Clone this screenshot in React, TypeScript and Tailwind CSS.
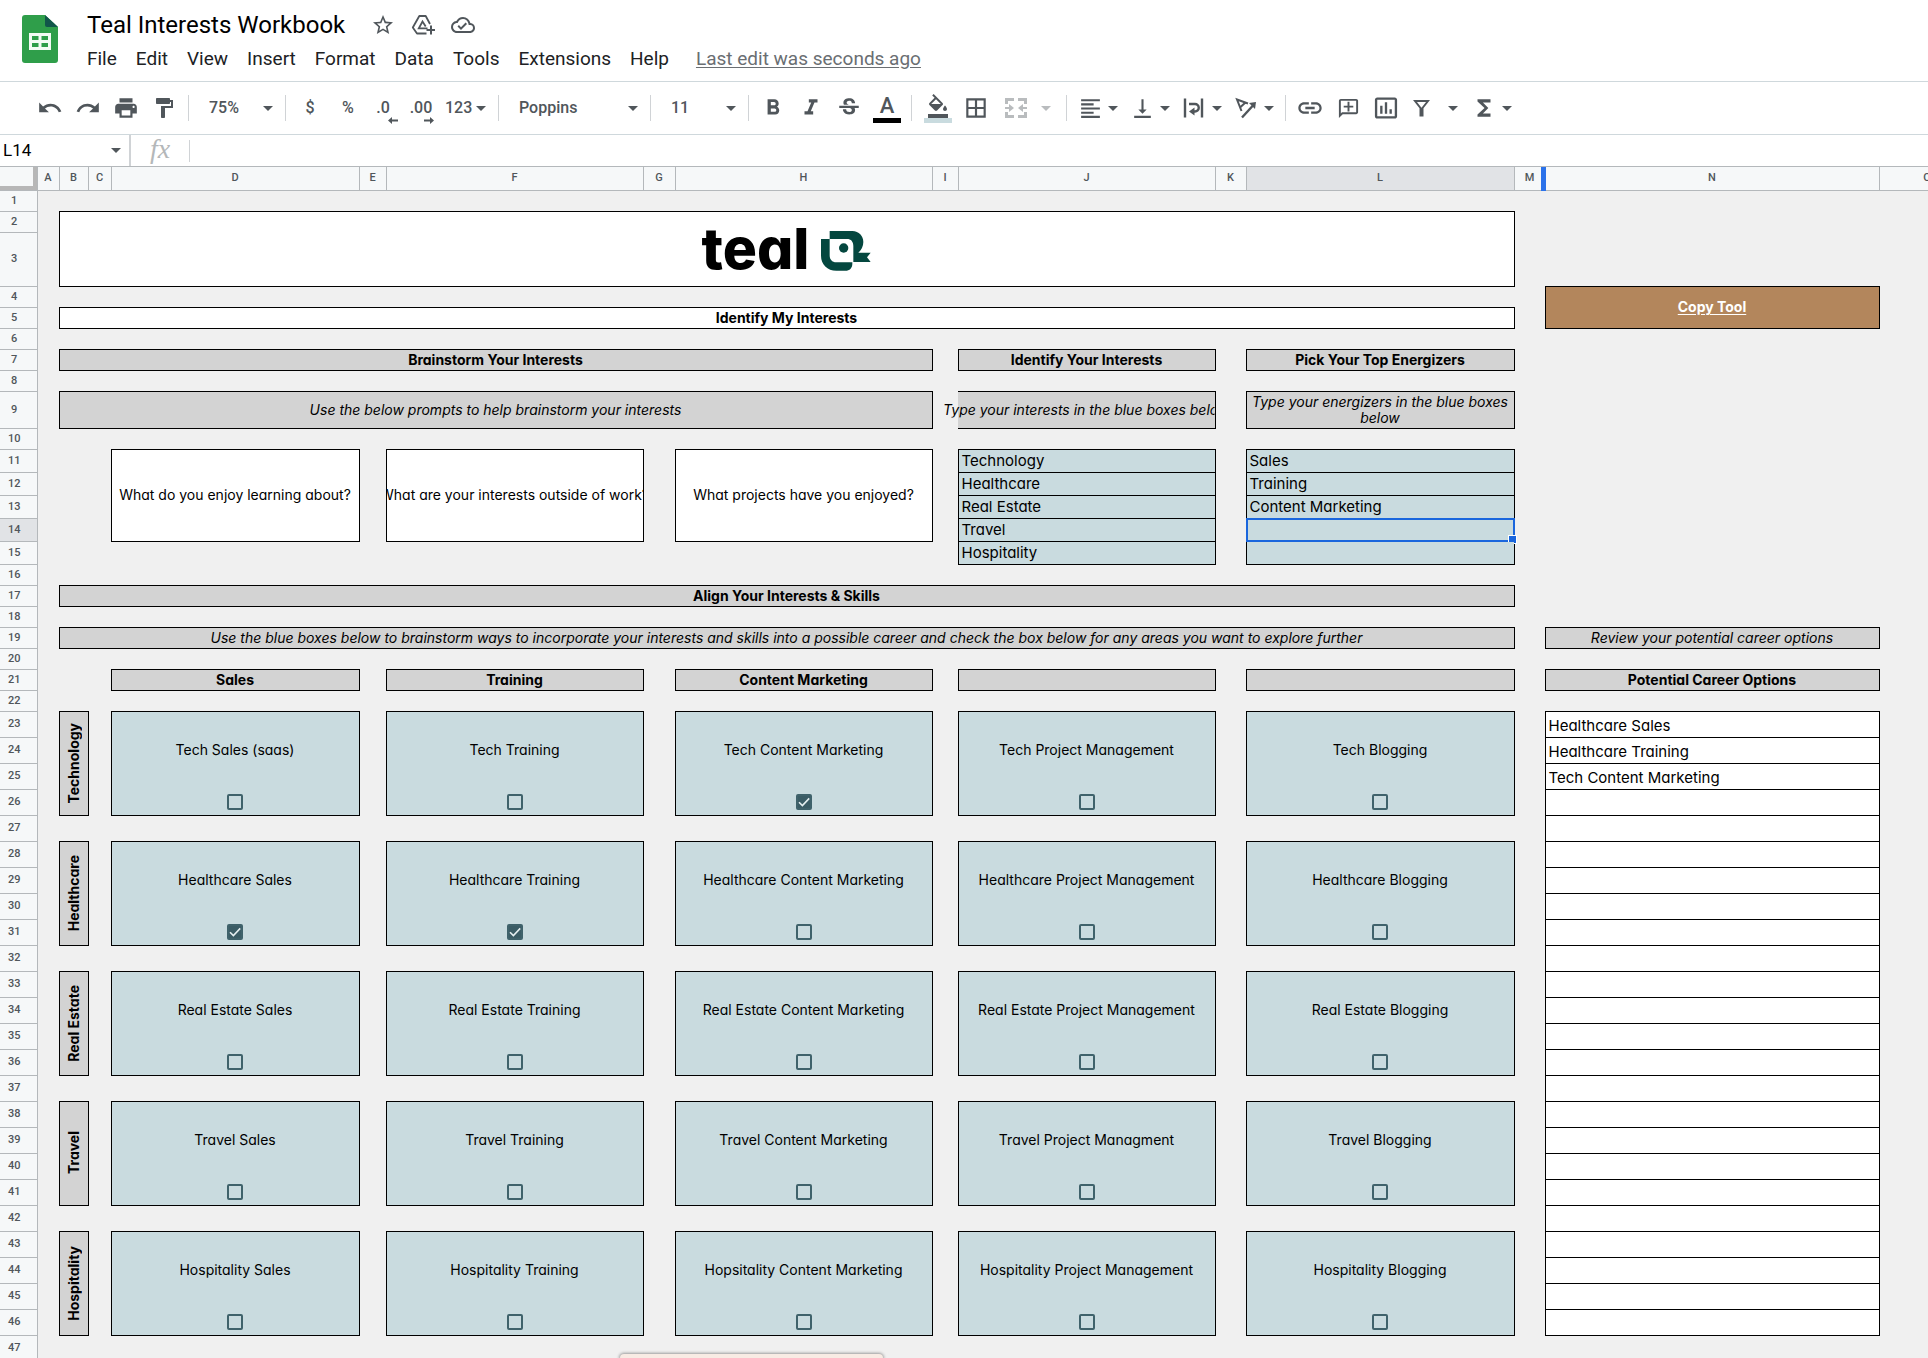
import type { ReactNode } from 'react'
import {
  MdBorderAll,
  MdFormatAlignLeft,
  MdFormatBold,
  MdFormatColorFill,
  MdFormatItalic,
  MdFormatPaint,
  MdFunctions,
  MdInsertChartOutlined,
  MdLink,
  MdOutlineAddComment,
  MdOutlineCloudDone,
  MdPrint,
  MdRedo,
  MdStarBorder,
  MdStrikethroughS,
  MdUndo,
  MdVerticalAlignBottom
} from 'react-icons/md'

interface Cell {
  rows?: number
  cols?: number
  className: string
  content?: ReactNode
}

const MENUS = ['File', 'Edit', 'View', 'Insert', 'Format', 'Data', 'Tools', 'Extensions', 'Help']

const COLUMNS = [
  { name: 'A', width: 'w-[22px]' },
  { name: 'B', width: 'w-[29px]' },
  { name: 'C', width: 'w-[23px]' },
  { name: 'D', width: 'w-[248px]' },
  { name: 'E', width: 'w-[27px]' },
  { name: 'F', width: 'w-[257px]' },
  { name: 'G', width: 'w-[32px]' },
  { name: 'H', width: 'w-[257px]' },
  { name: 'I', width: 'w-[26px]' },
  { name: 'J', width: 'w-[257px]' },
  { name: 'K', width: 'w-[31px]' },
  { name: 'L', width: 'w-[268px]' },
  { name: 'M', width: 'w-[31px]' },
  { name: 'N', width: 'w-[334px]' },
  { name: 'O', width: 'w-[96px]' }
]

const ROW_COUNT = 47

const rowHeight = (row: number) => {
  if (row === 3) return 'h-[54px]'
  if (row === 9) return 'h-[37px]'
  if (row >= 11 && row <= 15) return 'h-[23px]'
  if (row >= 23) return 'h-[26px]'
  return 'h-[21px]'
}

const interests = ['Technology', 'Healthcare', 'Real Estate', 'Travel', 'Hospitality']
const energizers = ['Sales', 'Training', 'Content Marketing', '', '']
const careerOptions = ['Healthcare Sales', 'Healthcare Training', 'Tech Content Marketing']
const boxColumns = ['D', 'F', 'H', 'J', 'L']

const ideas = [
  ['Tech Sales (saas)', 'Tech Training', 'Tech Content Marketing', 'Tech Project Management', 'Tech Blogging'],
  ['Healthcare Sales', 'Healthcare Training', 'Healthcare Content Marketing', 'Healthcare Project Management', 'Healthcare Blogging'],
  ['Real Estate Sales', 'Real Estate Training', 'Real Estate Content Marketing', 'Real Estate Project Management', 'Real Estate Blogging'],
  ['Travel Sales', 'Travel Training', 'Travel Content Marketing', 'Travel Project Managment', 'Travel Blogging'],
  ['Hospitality Sales', 'Hospitality Training', 'Hopsitality Content Marketing', 'Hospitality Project Management', 'Hospitality Blogging']
]
const checkedIdeas = ['Tech Content Marketing', 'Healthcare Sales', 'Healthcare Training']

const heading = 'border border-black bg-[#d3d3d3] text-center text-sm leading-4 font-bold'
const hint = 'border border-black bg-[#d3d3d3] text-center text-sm leading-4 italic'
const prompt = 'border border-black bg-white text-sm leading-4'

function IdeaCheckbox({ label }: { label: string }) {
  return (
    <div className="relative mx-auto size-4">
      <input
        type="checkbox"
        aria-label={label}
        defaultChecked={checkedIdeas.includes(label)}
        className="peer block size-4 appearance-none rounded-[2px] border-2 border-[#3f626b] checked:bg-[#3a5c65]"
      />
      <svg viewBox="0 0 16 16" className="pointer-events-none absolute inset-0 hidden size-4 peer-checked:block">
        <path d="M3 8.2 6.4 11.6 13.2 4.4" fill="none" stroke="#e4eef0" strokeWidth="1.6" />
      </svg>
    </div>
  )
}

function TealLogo() {
  return (
    <div className="flex items-center justify-center gap-3">
      <span className="text-[57px] leading-[60px] font-extrabold">teal</span>
      <svg viewBox="0 0 150 120" className="mt-1 h-10 w-[50px]" fill="#04473f">
        <path d="M26 0H94C114 0 127 15 127 33C127 46 121 57 112 65H149L138 79L149 93H97V45C97 32 90 24 78 24H26Z" />
        <path d="M0 24H26V73C26 86 33 94 46 94H94V98C94 111 86 119 73 119H46C19 119 0 100 0 74Z" />
        <circle cx="68" cy="51" r="14" />
      </svg>
    </div>
  )
}

function buildCells() {
  const cells: Record<string, Cell> = {
    B2: { rows: 2, cols: 11, className: 'border border-black bg-white', content: <TealLogo /> },
    N4: {
      rows: 2,
      className: 'border border-black bg-[#b3865c] text-center text-sm leading-4 font-bold text-white',
      content: <a href="#copy" className="underline underline-offset-2">Copy Tool</a>
    },
    B5: {
      cols: 11,
      className: 'border border-black bg-white text-center text-sm leading-4 font-bold',
      content: 'Identify My Interests'
    },
    B7: { cols: 7, className: heading, content: 'Brainstorm Your Interests' },
    J7: { className: heading, content: 'Identify Your Interests' },
    L7: { className: heading, content: 'Pick Your Top Energizers' },
    B9: { cols: 7, className: hint, content: 'Use the below prompts to help brainstorm your interests' },
    J9: {
      className: 'border-y border-r border-black bg-[#d3d3d3] text-sm leading-4 italic',
      // spills into column I, cut off at the right edge
      content: (
        <div className="flex justify-center whitespace-nowrap [clip-path:inset(0_0_0_-26px)]">
          Type your interests in the blue boxes below
        </div>
      )
    },
    L9: { className: hint, content: 'Type your energizers in the blue boxes below' },
    D11: { rows: 4, className: prompt, content: <Prompt text="What do you enjoy learning about?" /> },
    F11: { rows: 4, className: prompt, content: <Prompt text="What are your interests outside of work?" /> },
    H11: { rows: 4, className: prompt, content: <Prompt text="What projects have you enjoyed?" /> },
    B17: { cols: 11, className: heading, content: 'Align Your Interests & Skills' },
    B19: {
      cols: 11,
      className: hint,
      content:
        'Use the blue boxes below to brainstorm ways to incorporate your interests and skills into a possible career and check the box below for any areas you want to explore further'
    },
    N19: { className: hint, content: 'Review your potential career options' },
    N21: { className: heading, content: 'Potential Career Options' }
  }

  interests.forEach((interest, i) => {
    const entry = 'relative border border-black bg-[#c9dbdf] px-[3px] text-[15px] leading-5'
    cells[`J${11 + i}`] = { className: entry, content: interest }
    cells[`L${11 + i}`] = { className: entry, content: i === 3 ? <Selection /> : energizers[i] }
    cells[`${boxColumns[i]}21`] = { className: heading, content: energizers[i] }

    const top = 23 + i * 5
    cells[`B${top}`] = {
      rows: 4,
      className: heading,
      content: (
        <div className="flex justify-center">
          <span className="rotate-180 [writing-mode:vertical-rl]">{interest}</span>
        </div>
      )
    }
    boxColumns.forEach((col, j) => {
      cells[`${col}${top}`] = {
        rows: 3,
        className: 'border-x border-t border-black bg-[#c9dbdf] text-center text-sm leading-4',
        content: ideas[i][j]
      }
      cells[`${col}${top + 3}`] = {
        className: 'border-x border-b border-black bg-[#c9dbdf]',
        content: <IdeaCheckbox label={ideas[i][j]} />
      }
    })
  })

  for (let row = 23; row <= 46; row++) {
    cells[`N${row}`] = {
      className: 'border border-black bg-white px-[3px] align-bottom text-[15px] leading-[22px]',
      content: careerOptions[row - 23]
    }
  }
  return cells
}

function Prompt({ text }: { text: string }) {
  return <div className="flex justify-center overflow-hidden whitespace-nowrap">{text}</div>
}

function Selection() {
  return (
    <div className="absolute -inset-px border-2 border-[#1a66dd]">
      <div className="absolute -right-1 -bottom-1 size-[9px] border border-white bg-[#1a66dd]" />
    </div>
  )
}

const cells = buildCells()

// cells hidden under a merged range
const covered = new Set<string>()
Object.entries(cells).forEach(([key, cell]) => {
  const col = COLUMNS.findIndex(c => c.name === key[0])
  const row = Number(key.slice(1))
  for (let r = 0; r < (cell.rows ?? 1); r++) {
    for (let c = 0; c < (cell.cols ?? 1); c++) {
      if (r || c) covered.add(`${COLUMNS[col + c].name}${row + r}`)
    }
  }
})

function Caret() {
  return (
    <svg viewBox="0 0 10 5" className="h-[5px] w-[10px] shrink-0" fill="currentColor">
      <path d="M0 0H10L5 5Z" />
    </svg>
  )
}

function Divider() {
  return <div className="mx-[5px] h-[26px] w-px shrink-0 bg-[#d0d3d6]" />
}

function ToolButton({ label, children }: { label: string; children: ReactNode }) {
  return (
    <button type="button" aria-label={label} className="flex h-9 w-[38px] shrink-0 items-center justify-center">
      {children}
    </button>
  )
}

function DropButton({ label, children }: { label: string; children: ReactNode }) {
  return (
    <button type="button" aria-label={label} className="flex h-9 w-[52px] shrink-0 items-center justify-center gap-[5px]">
      {children}
      <Caret />
    </button>
  )
}

function ToolSelect({ label, value, className }: { label: string; value: string; className: string }) {
  return (
    <div className={`relative flex shrink-0 items-center ${className}`}>
      <select aria-label={label} defaultValue={value} className="w-full appearance-none bg-transparent pl-[15px] outline-none">
        <option>{value}</option>
      </select>
      <div className="pointer-events-none absolute right-[7px]">
        <Caret />
      </div>
    </div>
  )
}

function SheetsLogo() {
  return (
    <svg viewBox="0 0 36 48" className="h-12 w-9">
      <path d="M3 0H23L36 12V45A3 3 0 0 1 33 48H3A3 3 0 0 1 0 45V3A3 3 0 0 1 3 0Z" fill="#2f9e4a" />
      <path d="M23 0L36 12H25A2 2 0 0 1 23 10Z" fill="#11564a" />
      <path d="M7 18H29V35H7ZM10 21V25H16.500V21ZM19.500 21V25H26V21ZM10 28V32H16.500V28ZM19.500 28V32H26V28Z" fill="#f4fbf5" fillRule="evenodd" />
    </svg>
  )
}

function AddToDriveIcon() {
  return (
    <svg viewBox="0 0 24 24" className="size-6" fill="none" stroke="currentColor" strokeWidth="1.8">
      <path d="M15.500 20.500H6L1.800 14.500L8.300 3H14.700L19 11" strokeLinejoin="round" />
      <path d="M16.500 15.300H7.800L11.500 8.600L14.700 13.500" />
      <path d="M20 12.500V21.500M15.500 17H24.500" strokeWidth="2" />
    </svg>
  )
}

function Header() {
  return (
    <header className="flex h-[81px] shrink-0 gap-[29px] pl-[22px]">
      <div className="pt-[15px]">
        <SheetsLogo />
      </div>
      <div className="pt-[9px]">
        <div className="flex items-center gap-4 text-[#50565b]">
          <h1 className="pr-[10px] text-2xl leading-8 text-black">Teal Interests Workbook</h1>
          <button type="button" aria-label="Star"><MdStarBorder className="size-6" /></button>
          <button type="button" aria-label="Add shortcut to Drive"><AddToDriveIcon /></button>
          <button type="button" aria-label="See document status"><MdOutlineCloudDone className="size-6" /></button>
        </div>
        <nav className="flex gap-[19px] pt-1 text-[19px] leading-7 text-[#202124]">
          {MENUS.map(menu => (
            <button key={menu} type="button">{menu}</button>
          ))}
          <a href="#history" className="pl-2 text-[#6a6e72] underline underline-offset-2">Last edit was seconds ago</a>
        </nav>
      </div>
    </header>
  )
}

function Toolbar() {
  return (
    <div className="flex h-[54px] shrink-0 items-center border-y border-[#cfd8dc] pl-[31px] text-base font-medium text-[#50565b]">
      <ToolButton label="Undo"><MdUndo className="size-[26px]" /></ToolButton>
      <ToolButton label="Redo"><MdRedo className="size-[26px]" /></ToolButton>
      <ToolButton label="Print"><MdPrint className="size-[26px]" /></ToolButton>
      <ToolButton label="Paint format"><MdFormatPaint className="size-6" /></ToolButton>
      <Divider />
      <ToolSelect label="Zoom" value="75%" className="w-[86px]" />
      <Divider />
      <ToolButton label="Currency">$</ToolButton>
      <ToolButton label="Percent">%</ToolButton>
      <ToolButton label="Decrease decimal places">
        <span className="relative mr-1.5">
          .0
          <svg viewBox="0 0 10 7" className="absolute -right-2 -bottom-1 h-[7px] w-[10px]" fill="currentColor">
            <path d="M4 0V2.500H10V4.500H4V7L0 3.500Z" />
          </svg>
        </span>
      </ToolButton>
      <ToolButton label="Increase decimal places">
        <span className="relative mr-1.5">
          .00
          <svg viewBox="0 0 10 7" className="absolute -right-0.5 -bottom-1 h-[7px] w-[10px]" fill="currentColor">
            <path d="M6 0V2.500H0V4.500H6V7L10 3.500Z" />
          </svg>
        </span>
      </ToolButton>
      <button type="button" className="flex h-9 w-[50px] shrink-0 items-center gap-1 pl-0.5">
        123
        <Caret />
      </button>
      <Divider />
      <ToolSelect label="Font" value="Poppins" className="w-[141px]" />
      <Divider />
      <ToolSelect label="Font size" value="11" className="w-[87px]" />
      <Divider />
      <ToolButton label="Bold"><MdFormatBold className="size-[26px]" /></ToolButton>
      <ToolButton label="Italic"><MdFormatItalic className="size-[26px]" /></ToolButton>
      <ToolButton label="Strikethrough"><MdStrikethroughS className="size-[26px]" /></ToolButton>
      <ToolButton label="Text color">
        <span className="flex flex-col items-center">
          <span className="h-6 text-[22px] leading-6">A</span>
          <span className="h-[5px] w-7 bg-black" />
        </span>
      </ToolButton>
      <Divider />
      <div className="w-0.5" />
      <ToolButton label="Fill color">
        <span className="flex flex-col items-center">
          <MdFormatColorFill className="size-6" />
          <span className="h-[5px] w-7 bg-[#c9dbdf]" />
        </span>
      </ToolButton>
      <ToolButton label="Borders"><MdBorderAll className="size-[26px]" /></ToolButton>
      <div className="flex w-[66px] text-[#b9bcbe]">
        <button type="button" aria-label="Merge cells" className="flex h-9 w-full items-center justify-center gap-[14px]">
          <svg viewBox="0 0 22 20" className="h-5 w-[22px] shrink-0" fill="currentColor">
            <path d="M0 0H9V3H3V6H0ZM13 0H22V6H19V3H13ZM0 14H3V17H9V20H0ZM19 14H22V20H13V17H19ZM0 9H4V6L9 10L4 14V11H0ZM22 9H18V6L13 10L18 14V11H22Z" />
          </svg>
          <Caret />
        </button>
      </div>
      <Divider />
      <DropButton label="Horizontal align"><MdFormatAlignLeft className="size-[25px]" /></DropButton>
      <DropButton label="Vertical align"><MdVerticalAlignBottom className="size-[25px]" /></DropButton>
      <DropButton label="Text wrapping">
        <svg viewBox="0 0 25 24" className="h-6 w-[25px]" fill="none" stroke="currentColor" strokeWidth="2.400">
          <path d="M3 2.500V21.500M20 2.500V21.500" />
          <path d="M7 8H13A3.500 3.500 0 0 1 13 15.500H11" />
          <path d="M12.500 11.500L7 15.500L12.500 19.500Z" fill="currentColor" stroke="none" />
        </svg>
      </DropButton>
      <DropButton label="Text rotation">
        <svg viewBox="0 0 25 24" className="h-6 w-[25px]" fill="none" stroke="currentColor" strokeWidth="2">
          <path d="M14 7.500L3 3.500L7.500 15M11.500 6.500L6 11.500" />
          <path d="M8 21.500L19 9.500" strokeWidth="2.400" />
          <path d="M15 7L22 6L21 13Z" fill="currentColor" stroke="none" />
        </svg>
      </DropButton>
      <Divider />
      <ToolButton label="Insert link"><MdLink className="size-7" /></ToolButton>
      <ToolButton label="Insert comment"><MdOutlineAddComment className="size-[23px] -scale-x-100" /></ToolButton>
      <ToolButton label="Insert chart"><MdInsertChartOutlined className="size-7" /></ToolButton>
      <button type="button" aria-label="Filter" className="flex h-9 w-[60px] shrink-0 items-center justify-center gap-[18px]">
        <svg viewBox="0 0 17 18" className="h-[18px] w-[17px]" fill="none" stroke="currentColor" strokeWidth="2">
          <path d="M2 2H15L9.500 9V16.500H7.500V9Z" />
        </svg>
        <Caret />
      </button>
      <DropButton label="Functions"><MdFunctions className="size-[26px]" /></DropButton>
    </div>
  )
}

function FormulaBar() {
  return (
    <div className="flex h-[31px] shrink-0 items-center text-[17px]">
      <div className="flex h-full w-[131px] items-center border-r-2 border-[#d0d3d6] pr-2 text-[#50565b]">
        <input aria-label="Name box" defaultValue="L14" className="min-w-0 flex-1 pl-[3px] text-black outline-none" />
        <Caret />
      </div>
      <span className="w-[58px] pb-1 pl-[19px] font-['Liberation_Serif',serif] text-[28px] leading-7 text-[#b4b7b9] italic">fx</span>
      <input aria-label="Formula" className="h-[22px] flex-1 border-l border-[#d0d3d6] pl-2 outline-none" />
    </div>
  )
}

function Sheet() {
  return (
    <main className="min-h-0 flex-1 overflow-auto border-t border-[#b4b8bb] bg-[#f0f0f0] [scrollbar-width:none]">
      <table className="w-[1975px] table-fixed border-collapse font-[Inter,sans-serif] text-black [font-feature-settings:'cv11']">
        <colgroup>
          <col className="w-[37px]" />
          {COLUMNS.map(col => (
            <col key={col.name} className={col.width} />
          ))}
        </colgroup>
        <thead>
          <tr className="h-[23px] font-[Roboto,sans-serif] text-[11px] leading-4 text-[#50565b]">
            <td className="relative border-r border-b border-[#b4b8bb] bg-[#f6f8f9] p-0">
              <div className="absolute inset-0 border-r-4 border-b-4 border-[#b7b7b7]" />
            </td>
            {COLUMNS.map(col => (
              <th
                key={col.name}
                scope="col"
                className={`relative border-x border-b border-[#b4b8bb] p-0 font-medium ${col.name === 'L' ? 'bg-[#e1e3e6]' : 'bg-[#f6f8f9]'}`}
              >
                {col.name}
                {col.name === 'M' && <div className="absolute -inset-y-px -right-px w-[5px] bg-[#2b72ea]" />}
              </th>
            ))}
          </tr>
        </thead>
        <tbody>
          {Array.from({ length: ROW_COUNT }, (_, i) => i + 1).map(row => (
            <tr key={row} className={rowHeight(row)}>
              <th
                scope="row"
                className={`border-y border-r border-[#b4b8bb] p-0 pr-2 font-[Roboto,sans-serif] text-[11px] leading-4 font-medium text-[#50565b] ${row === 14 ? 'bg-[#e1e3e6]' : 'bg-[#f6f8f9]'}`}
              >
                {row}
              </th>
              {COLUMNS.map(col => {
                const key = `${col.name}${row}`
                if (covered.has(key)) return null
                const cell = cells[key]
                return (
                  <td key={key} rowSpan={cell?.rows} colSpan={cell?.cols} className={`py-0 ${cell?.className ?? ''}`}>
                    {cell?.content}
                  </td>
                )
              })}
            </tr>
          ))}
        </tbody>
      </table>
    </main>
  )
}

export default function App() {
  return (
    <div className="relative flex h-screen flex-col overflow-hidden bg-white font-[Roboto,sans-serif]">
      <Header />
      <Toolbar />
      <FormulaBar />
      <Sheet />
      <div className="absolute bottom-0 left-[620px] h-1 w-[263px] rounded-t-lg bg-[#f8ebe4] shadow-[0_0_3px_1px_#9a9a9a]" />
    </div>
  )
}
